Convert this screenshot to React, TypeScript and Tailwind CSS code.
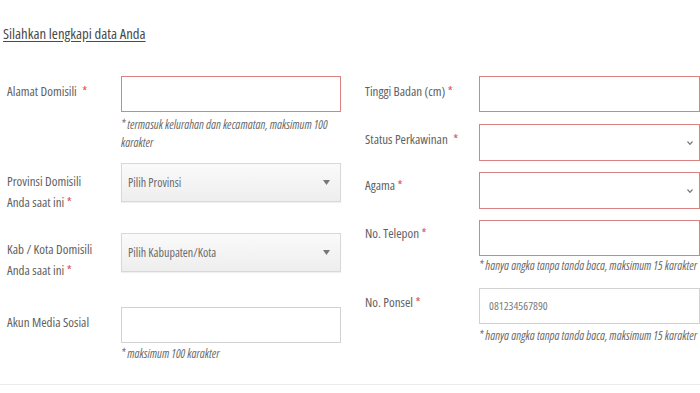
import { ReactNode } from "react";

const Star = () => <span className="text-[#d9534f]"> *</span>;

const Help = ({ children, className = "" }: { children: ReactNode; className?: string }) => (
  <p className={`whitespace-nowrap text-[12px] italic leading-[18px] text-[#6a6a6a] ${className}`}>{children}</p>
);

const TextBox = ({ value, red = true }: { value?: string; red?: boolean }) => (
  <div
    className={`flex h-[36px] items-center border bg-white px-[9px] text-[11.5px] text-[#7a7a7a] ${
      red ? "border-[#d98282]" : "border-[#d2d2d2]"
    }`}
  >
    {value}
  </div>
);

const GraySelect = ({ placeholder }: { placeholder: string }) => (
  <div className="flex h-[39px] items-center justify-between border border-[#d8d8d8] bg-gradient-to-b from-[#fafafa] to-[#eeeeee] pl-[6px] pr-[10px] text-[12px] text-[#6a6a6a] shadow-[0_1px_1px_rgba(0,0,0,0.06)]">
    <span>{placeholder}</span>
    <svg width="7" height="5" viewBox="0 0 7 5">
      <path d="M0 0h7L3.5 5z" fill="#777" />
    </svg>
  </div>
);

const RedSelect = () => (
  <div className="flex h-[37px] items-center justify-end border border-[#d98282] bg-white pr-[5px]">
    <svg width="8" height="6" viewBox="0 0 8 6">
      <path d="M1.5 1.5l2.5 2.8 2.5-2.8" fill="none" stroke="#777" strokeWidth="1.2" />
    </svg>
  </div>
);

const Row = ({
  label,
  labelW,
  labelPad,
  className = "",
  children,
}: {
  label: ReactNode;
  labelW: string;
  labelPad: string;
  className?: string;
  children: ReactNode;
}) => (
  <div className={`flex items-start ${className}`}>
    <div className={`${labelW} ${labelPad} shrink-0 text-[13px] leading-[21px] text-[#616161]`}>{label}</div>
    <div className="min-w-0 flex-1">{children}</div>
  </div>
);

export default function App() {
  return (
    <div
      className="h-[393px] w-[700px] overflow-hidden bg-white"
      style={{ fontFamily: '"Open Sans", "Liberation Sans", sans-serif', fontStretch: "condensed" }}
    >
      <div className="pl-[3px] pt-[23px]">
        <h2 className="text-[14.7px] leading-[20px] text-[#4a4a4a] underline underline-offset-2">
          Silahkan lengkapi data Anda
        </h2>
      </div>

      <div className="mt-[33px] flex">
        {/* left column */}
        <div className="w-[341px] shrink-0">
          <Row
            labelW="w-[121px]"
            labelPad="pl-[7px] pt-[5px]"
            label={
              <>
                Alamat Domisili <span className="ml-[3px] text-[#d9534f]">*</span>
              </>
            }
          >
            <TextBox />
            <Help className="mt-[4px]">
              * termasuk kelurahan dan kecamatan, maksimum 100
              <br />
              karakter
            </Help>
          </Row>

          <Row
            className="mt-[11px]"
            labelW="w-[121px]"
            labelPad="pl-[7px] pt-[8px]"
            label={
              <>
                Provinsi Domisili
                <br />
                Anda saat ini<Star />
              </>
            }
          >
            <GraySelect placeholder="Pilih Provinsi" />
          </Row>

          <Row
            className="mt-[20px]"
            labelW="w-[121px]"
            labelPad="pl-[7px] pt-[6px]"
            label={
              <>
                Kab / Kota Domisili
                <br />
                Anda saat ini<Star />
              </>
            }
          >
            <GraySelect placeholder="Pilih Kabupaten/Kota" />
          </Row>

          <Row
            className="mt-[26px]"
            labelW="w-[121px]"
            labelPad="pl-[7px] pt-[5px]"
            label="Akun Media Sosial"
          >
            <TextBox red={false} />
            <Help className="mt-[2px]">* maksimum 100 karakter</Help>
          </Row>
        </div>

        {/* right column */}
        <div className="ml-[24px] flex-1">
          <Row
            labelW="w-[114px]"
            labelPad="pt-[5px]"
            label={
              <>
                Tinggi Badan (cm)<Star />
              </>
            }
          >
            <TextBox />
          </Row>
          <Row
            className="mt-[12px]"
            labelW="w-[114px]"
            labelPad="pt-[5px]"
            label={
              <>
                Status Perkawinan <span className="ml-[3px] text-[#d9534f]">*</span>
              </>
            }
          >
            <RedSelect />
          </Row>
          <Row
            className="mt-[11px]"
            labelW="w-[114px]"
            labelPad="pt-[3px]"
            label={
              <>
                Agama<Star />
              </>
            }
          >
            <RedSelect />
          </Row>
          <Row
            className="mt-[11px]"
            labelW="w-[114px]"
            labelPad="pt-[3px]"
            label={
              <>
                No. Telepon<Star />
              </>
            }
          >
            <TextBox />
            <Help className="mt-[1px]">* hanya angka tanpa tanda baca, maksimum 15 karakter</Help>
          </Row>
          <Row
            className="mt-[13px]"
            labelW="w-[114px]"
            labelPad="pt-[4px]"
            label={
              <>
                No. Ponsel<Star />
              </>
            }
          >
            <TextBox red={false} value="081234567890" />
            <Help className="mt-[3px]">* hanya angka tanpa tanda baca, maksimum 15 karakter</Help>
          </Row>
        </div>
      </div>

      <div className="mt-[21px] border-t border-[#ececec]" />
    </div>
  );
}
